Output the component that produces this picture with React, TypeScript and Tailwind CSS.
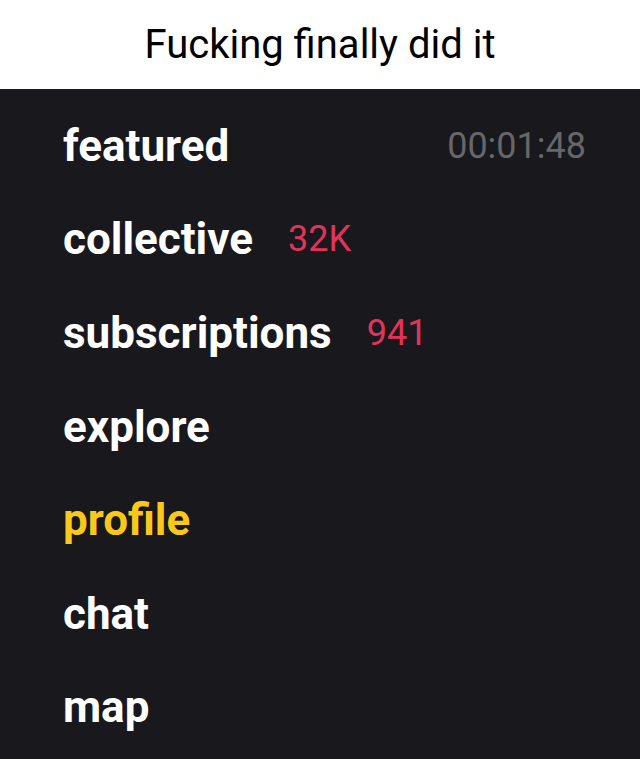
export default function App() {
  const items: { label: string; count?: string; active?: boolean }[] = [
    { label: "featured" },
    { label: "collective", count: "32K" },
    { label: "subscriptions", count: "941" },
    { label: "explore" },
    { label: "profile", active: true },
    { label: "chat" },
    { label: "map" },
  ];
  return (
    <div className="w-[640px] h-[759px] flex flex-col bg-[#18181d]" style={{ fontFamily: "Roboto, sans-serif" }}>
      <div className="h-[89px] bg-white flex items-center justify-center">
        <span className="text-[40px] text-black leading-none">Fucking finally did it</span>
      </div>
      <div className="flex-1 flex flex-col px-[63px] pt-[10px]">
        {items.map((it, i) => (
          <div key={it.label} className="h-[93.6px] flex items-center">
            <span className={`text-[44px] font-bold leading-none ${it.active ? "text-[#f8c81c]" : "text-white"}`}>{it.label}</span>
            {it.count && <span className="ml-[35px] text-[36px] leading-none text-[#e2345a]">{it.count}</span>}
            {i === 0 && <span className="ml-auto mr-[-9px] text-[36px] leading-none text-[#66666b]">00:01:48</span>}
          </div>
        ))}
      </div>
    </div>
  );
}
